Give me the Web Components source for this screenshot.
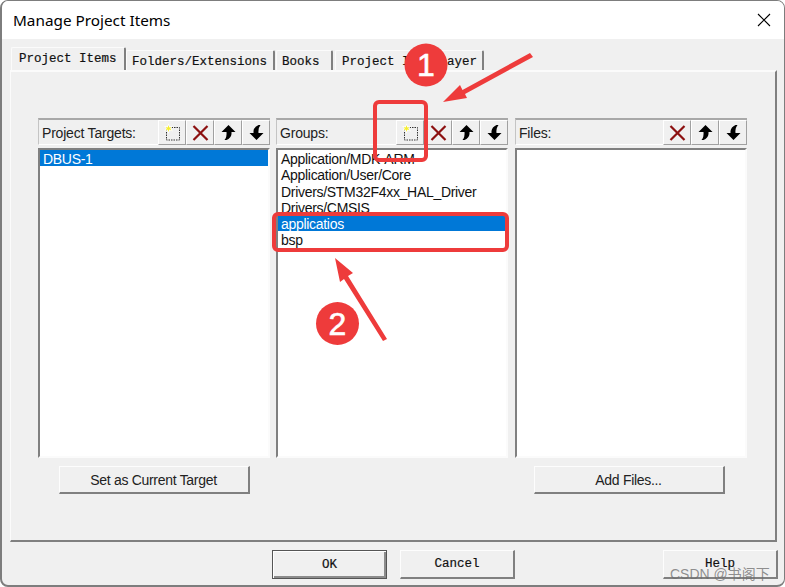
<!DOCTYPE html>
<html>
<head>
<meta charset="utf-8">
<title>Manage Project Items</title>
<style>
html, body { margin: 0; padding: 0; background: #fff; }
body { width: 785px; height: 587px; overflow: hidden; }
</style>
</head>
<body>
<mpi-window heading="Manage Project Items">
  <mpi-tabs slot="tabs">
    <mpi-tab active style="width:115px">Project Items</mpi-tab>
    <mpi-tab style="width:149px;--pad:5px">Folders/Extensions</mpi-tab>
    <mpi-tab style="width:57px;--pad:5px">Books</mpi-tab>
    <mpi-tab style="width:149px;--pad:6px;margin-left:1px">Project Info/Layer</mpi-tab>
  </mpi-tabs>
  <mpi-pane label="Project Targets:" tools="new del up down" action="Set as Current Target">
    <mpi-item selected>DBUS-1</mpi-item>
  </mpi-pane>
  <mpi-pane label="Groups:" tools="new del up down">
    <mpi-item>Application/MDK-ARM</mpi-item>
    <mpi-item>Application/User/Core</mpi-item>
    <mpi-item>Drivers/STM32F4xx_HAL_Driver</mpi-item>
    <mpi-item>Drivers/CMSIS</mpi-item>
    <mpi-item selected>applicatios</mpi-item>
    <mpi-item>bsp</mpi-item>
  </mpi-pane>
  <mpi-pane label="Files:" tools="del up down" action="Add Files..." style="--action-shift:-2px"></mpi-pane>
  <mpi-button slot="footer" default style="margin-left:270px">OK</mpi-button>
  <mpi-button slot="footer" style="margin-left:13px">Cancel</mpi-button>
  <mpi-button slot="footer" style="margin-left:148px">Help</mpi-button>
</mpi-window>
<mpi-annotations></mpi-annotations>

<script>
class MpiWindow extends HTMLElement {
  constructor() {
    super();
    this.attachShadow({ mode: 'open' });
    this.shadowRoot.innerHTML = `
    <style>
      :host {
        display: flex;
        flex-direction: column;
        box-sizing: border-box;
        width: 785px;
        height: 587px;
        background: #f0f0f0;
        border: solid #7d7d7d;
        border-width: 1px 1px 2px 2px;
        border-radius: 8px;
        overflow: hidden;
      }
      .title {
        flex: none;
        box-sizing: border-box;
        height: 38px;
        display: flex;
        align-items: center;
        justify-content: space-between;
        background: #fff;
        padding: 0 13px 1px 11px;
        font: 15.3px "Noto Sans", sans-serif;
        color: #000;
      }
      .body { flex: 1; display: flex; flex-direction: column; padding: 7px 0 0 8px; }
      .panel {
        box-sizing: border-box;
        width: 767px;
        height: 472px;
        border: solid #fbfbfb;
        border-width: 2px 0 0 1px;
        border-right: 2px solid #808080;
        border-bottom: 2px solid #808080;
        padding: 46px 0 0 27px;
        display: flex;
        gap: 6px;
      }
      .panel ::slotted(mpi-pane:last-of-type) { margin-left: 1px; }
      .footer { display: flex; padding-top: 8px; margin-left: -8px; }
    </style>
    <div class="title">
      <span id="heading"></span>
      <svg width="14" height="14" viewBox="0 0 14 14"><path d="M1 1 L13 13 M13 1 L1 13" stroke="#000" stroke-width="1.1" fill="none"/></svg>
    </div>
    <div class="body">
      <slot name="tabs"></slot>
      <div class="panel"><slot></slot></div>
      <div class="footer"><slot name="footer"></slot></div>
    </div>`;
  }
  connectedCallback() {
    this.shadowRoot.getElementById('heading').textContent = this.getAttribute('heading');
  }
}

class MpiTabs extends HTMLElement {
  constructor() {
    super();
    this.attachShadow({ mode: 'open' });
    this.shadowRoot.innerHTML = `
    <style>
      :host { display: flex; align-items: flex-end; height: 24px; padding-left: 1px; position: relative; }
    </style>
    <slot></slot>`;
  }
}

class MpiTab extends HTMLElement {
  constructor() {
    super();
    this.attachShadow({ mode: 'open' });
    this.shadowRoot.innerHTML = `
    <style>
      :host {
        display: block;
        box-sizing: border-box;
        height: 20px;
        padding: 3px 0 0 var(--pad, 4px);
        margin-right: 1px;
        background: #f0f0f0;
        border: solid #fbfbfb;
        border-width: 1px 0 0 1px;
        border-right: 2px solid #808080;
        border-radius: 2px 2px 0 0;
        font: 12.5px/17px "Liberation Mono", monospace;
        -webkit-text-stroke: 0.2px #111;
        color: #111;
        white-space: nowrap;
      }
      :host([active]) { height: 23px; padding: 3px 0 0 7px; margin-right: 0; }
    </style>
    <slot></slot>`;
  }
}

const TOOL_ICONS = {
  new: `<rect x="2.5" y="3.5" width="13" height="12.5" fill="none" stroke="#333" stroke-width="1" stroke-dasharray="1.5 1"/>
        <path d="M4.5 -0.5 L5.8 2.6 L9 2 L7 4.5 L9 7.5 L5.8 6.4 L4.5 9.5 L3.2 6.4 L0 7.5 L2 4.5 L0 2 L3.2 2.6 Z" fill="#fff"/>
        <path d="M4.5 1 L5.3 3.4 L7.5 3 L6.2 4.6 L7.5 6.6 L5.3 5.6 L4.5 8 L3.7 5.6 L1.5 6.6 L2.8 4.6 L1.5 3 L3.7 3.4 Z" fill="#f5ee30"/>`,
  del: `<path d="M1.5 2 L15.5 16 M15.5 2 L1.5 16" stroke="#8c1010" stroke-width="2.2" fill="none"/>`,
  up: `<path d="M8.5 1 L15.5 8 L11.5 8 L11.5 10 Q11 14 6.5 16 L4.5 16 Q7 13 6.5 8 L1.5 8 Z" fill="#000"/>`,
  down: `<path d="M8.5 16 L1.5 9 L5.5 9 L5.5 7 Q6 3 10.5 1 L12.5 1 Q10 4 10.5 9 L15.5 9 Z" fill="#000"/>`
};

class MpiTool extends HTMLElement {
  constructor() {
    super();
    this.attachShadow({ mode: 'open' });
    this.shadowRoot.innerHTML = `
    <style>
      :host {
        display: flex;
        align-items: center;
        justify-content: center;
        box-sizing: border-box;
        width: 28px;
        height: 25px;
        border: solid #fff;
        border-width: 1px 0 0 1px;
        border-right: 1px solid #a0a0a0;
        border-bottom: 1px solid #a0a0a0;
      }
      svg { overflow: visible; }
    </style>
    <svg width="17" height="17" viewBox="0 0 17 17"></svg>`;
  }
  connectedCallback() {
    this.shadowRoot.querySelector('svg').innerHTML = TOOL_ICONS[this.getAttribute('icon')];
  }
}

class MpiItem extends HTMLElement {
  constructor() {
    super();
    this.attachShadow({ mode: 'open' });
    this.shadowRoot.innerHTML = `
    <style>
      :host {
        display: block;
        height: 16.25px;
        padding-left: 3px;
        font: 14px/18px "Liberation Sans", Arial, sans-serif;
        letter-spacing: -0.3px;
        color: #111;
        white-space: nowrap;
      }
      :host([selected]) { background: #0078d7; color: #fff; }
    </style>
    <slot></slot>`;
  }
}

class MpiPane extends HTMLElement {
  constructor() {
    super();
    this.attachShadow({ mode: 'open' });
    this.shadowRoot.innerHTML = `
    <style>
      :host { display: flex; flex-direction: column; width: 232px; }
      .head {
        box-sizing: border-box;
        height: 27px;
        display: flex;
        align-items: center;
        justify-content: space-between;
        border-top: 2px solid #a8a8a8;
        border-left: 1px solid #c4c4c4;
        border-bottom: 1px solid #fff;
        font: 14px "Liberation Sans", Arial, sans-serif;
        letter-spacing: -0.2px;
        color: #222;
      }
      .head span { padding: 2px 0 0 3px; }
      .tools { display: flex; }
      .list {
        box-sizing: border-box;
        height: 310px;
        margin-top: 3px;
        background: #fff;
        border: solid #fbfbfb;
        border-width: 0 2px 2px 0;
        border-top: 2px solid #808080;
        border-left: 2px solid #808080;
      }
      .action { display: flex; justify-content: center; margin-top: 8px; transform: translateX(var(--action-shift, 0)); }
    </style>
    <div class="head">
      <span id="label"></span>
      <div class="tools" id="tools"></div>
    </div>
    <div class="list"><slot></slot></div>
    <div class="action" id="action"></div>`;
  }
  connectedCallback() {
    this.shadowRoot.getElementById('label').textContent = this.getAttribute('label');
    const tools = this.shadowRoot.getElementById('tools');
    this.getAttribute('tools').split(' ').forEach(name => {
      const tool = document.createElement('mpi-tool');
      tool.setAttribute('icon', name);
      tools.appendChild(tool);
    });
    if (this.hasAttribute('action')) {
      const btn = document.createElement('mpi-button');
      btn.setAttribute('wide', '');
      btn.textContent = this.getAttribute('action');
      this.shadowRoot.getElementById('action').appendChild(btn);
    }
  }
}

class MpiButton extends HTMLElement {
  constructor() {
    super();
    this.attachShadow({ mode: 'open' });
    this.shadowRoot.innerHTML = `
    <style>
      :host {
        display: flex;
        align-items: center;
        justify-content: center;
        box-sizing: border-box;
        width: 115px;
        height: 29px;
        background: #f0f0f0;
        border: solid #fdfdfd;
        border-width: 1px 0 0 1px;
        border-right: 2px solid #808080;
        border-bottom: 2px solid #808080;
        font: 12.5px "Liberation Mono", monospace;
        -webkit-text-stroke: 0.2px #111;
        color: #111;
      }
      :host([default]) {
        border: 1px solid #555;
        box-shadow: inset 1px 1px #fff, inset -2px -2px #8c8c8c;
      }
      :host([wide]) {
        width: 191px;
        height: 28px;
        font: 14px "Liberation Sans", Arial, sans-serif;
        -webkit-text-stroke: 0;
        letter-spacing: -0.3px;
        color: #222;
      }
    </style>
    <slot></slot>`;
  }
}

class MpiAnnotations extends HTMLElement {
  constructor() {
    super();
    this.attachShadow({ mode: 'open' });
    this.shadowRoot.innerHTML = `
    <style>
      :host { position: absolute; left: 0; top: 0; width: 785px; height: 587px; pointer-events: none; z-index: 5; }
      svg { display: block; }
      .num { font: 32px "Liberation Sans", Arial, sans-serif; fill: #fff; stroke: #fff; stroke-width: 0.6; text-anchor: middle; }
      .mark { position: absolute; left: 670px; top: 563px; font: 14px "Liberation Sans", "Noto Sans CJK SC", sans-serif; color: rgba(110,110,110,.75); white-space: nowrap; }
    </style>
    <svg width="785" height="587" viewBox="0 0 785 587">
      <g fill="none" stroke="#ee3b3b" stroke-width="4">
        <rect x="375" y="102" width="51" height="58" rx="4"/>
        <rect x="274" y="214" width="233" height="36" rx="4"/>
      </g>
      <g fill="#ee3b3b">
        <path d="M443 102 L460 85 L462.5 90 L530 53 L533 57 L465 94 L467 98 Z"/>
        <path d="M335 258 L353 273 L348 276 L387 339 L383 341 L344 279 L340 282 Z"/>
        <circle cx="426" cy="65" r="21.5"/>
        <circle cx="337.5" cy="323.5" r="21.5"/>
      </g>
      <text class="num" x="426" y="76">1</text>
      <text class="num" x="337.5" y="335">2</text>
    </svg>
    <div class="mark">CSDN @书阁下</div>`;
  }
}

customElements.define('mpi-window', MpiWindow);
customElements.define('mpi-tabs', MpiTabs);
customElements.define('mpi-tab', MpiTab);
customElements.define('mpi-tool', MpiTool);
customElements.define('mpi-item', MpiItem);
customElements.define('mpi-pane', MpiPane);
customElements.define('mpi-button', MpiButton);
customElements.define('mpi-annotations', MpiAnnotations);
</script>
</body>
</html>
